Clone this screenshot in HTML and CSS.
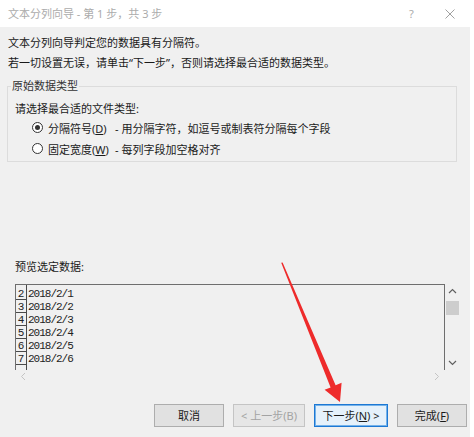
FILE: index.html
```html
<!DOCTYPE HTML>
<html>
    <head>
        <meta charset='utf-8'/>
        <link rel="stylesheet" href="styles.css">
    </head>
    <body>
        <div class="window">
            <div class="titlebar">
                <span class="title">文本分列向导 - 第 1 步，共 3 步</span>
                <span class="help">?</span>
                <svg class="close" width="10" height="10" viewBox="0 0 10 10">
                    <path d="M0.5 0.5 L9.5 9.5 M9.5 0.5 L0.5 9.5" stroke="#a0a0a0" stroke-width="1" fill="none"/>
                </svg>
            </div>
            <div class="dialog">
                <p class="intro">文本分列向导判定您的数据具有分隔符。</p>
                <p class="intro second">若一切设置无误，请单击“下一步”，否则请选择最合适的数据类型。</p>

                <fieldset class="group">
                    <legend>原始数据类型</legend>
                    <div class="ask">请选择最合适的文件类型:</div>
                    <div class="radio-row">
                        <span class="radio checked"></span>
                        <span class="radio-name">分隔符号(<u>D</u>)</span>
                        <span class="radio-desc">- 用分隔字符，如逗号或制表符分隔每个字段</span>
                    </div>
                    <div class="radio-row">
                        <span class="radio"></span>
                        <span class="radio-name">固定宽度(<u>W</u>)</span>
                        <span class="radio-desc">- 每列字段加空格对齐</span>
                    </div>
                </fieldset>

                <div class="preview-label">预览选定数据:</div>
                <div class="preview">
                    <div class="frame">
                        <div class="nums">
                            <div class="num">2</div>
                            <div class="num">3</div>
                            <div class="num">4</div>
                            <div class="num">5</div>
                            <div class="num">6</div>
                            <div class="num">7</div>
                            <div class="num"></div>
                        </div>
                        <div class="vals">
                            <div class="val">2018/2/1</div>
                            <div class="val">2018/2/2</div>
                            <div class="val">2018/2/3</div>
                            <div class="val">2018/2/4</div>
                            <div class="val">2018/2/5</div>
                            <div class="val">2018/2/6</div>
                        </div>
                    </div>
                    <div class="vscroll">
                        <svg class="chev" width="9" height="6" viewBox="0 0 9 6"><path d="M1 5 L4.5 1.5 L8 5" stroke="#606060" stroke-width="1.2" fill="none"/></svg>
                        <div class="thumb"></div>
                        <div class="track"></div>
                        <svg class="chev" width="9" height="6" viewBox="0 0 9 6"><path d="M1 1 L4.5 4.5 L8 1" stroke="#606060" stroke-width="1.2" fill="none"/></svg>
                    </div>
                </div>
                <div class="hscroll">
                    <svg width="6" height="9" viewBox="0 0 6 9"><path d="M5 1 L1.5 4.5 L5 8" stroke="#c4c4c4" stroke-width="1" fill="none"/></svg>
                    <svg width="6" height="9" viewBox="0 0 6 9"><path d="M1 1 L4.5 4.5 L1 8" stroke="#c4c4c4" stroke-width="1" fill="none"/></svg>
                </div>

                <div class="buttons">
                    <div class="btn w70">取消</div>
                    <div class="btn w72 disabled">&lt; 上一步(B)</div>
                    <div class="btn w74 default">下一步(<u>N</u>) &gt;</div>
                    <div class="btn w70">完成(<u>F</u>)</div>
                </div>
            </div>

            <!-- red pointer drawn over the dialog -->
            <svg class="pointer" width="474" height="437" viewBox="0 0 474 437">
                <polygon points="281.2,262.8 282.6,262.4 335.6,385.2 341.6,382.8 340,402 324.6,389.8 330.6,387.4" fill="#ee2b2b"/>
            </svg>
        </div>
    </body>
</html>
```

FILE: styles.css
```css
body{
    margin: 0;
    background: #ffffff;
    font-family: "Noto Sans", "Noto Sans CJK SC", sans-serif;
    font-size: 11px;
    color: #1a1a1a;
}
.window{
    position: relative;
    width: 470px;
    height: 437px;
}
.titlebar{
    height: 27px;
    display: flex;
    align-items: center;
    padding-left: 8px;
    background: #ffffff;
    color: #ababab;
}
.title{
    flex: 1;
    line-height: 16px;
}
.help{
    width: 7px;
    text-align: center;
    margin-right: 30px;
}
.close{
    margin-right: 15px;
}
.dialog{
    height: 410px;
    box-sizing: border-box;
    padding-top: 8px;
    background: #f0f0f0;
    display: flex;
    flex-direction: column;
}
.intro{
    margin: 0;
    padding-left: 8px;
    line-height: 16px;
}
.intro.second{
    margin-top: 4px;
}
.group{
    margin: 8px 0 0 7px;
    width: 450px;
    box-sizing: border-box;
    border: 1px solid #dcdcdc;
    padding: 0 0 2px 7px;
}
.group legend{
    padding: 0 1px;
    margin-left: -4px;
    line-height: 14px;
    color: #333333;
}
.ask{
    margin-top: 8px;
    line-height: 16px;
}
.radio-row{
    height: 21px;
    display: flex;
    align-items: center;
    padding-left: 17px;
}
.radio{
    flex: none;
    width: 11px;
    height: 11px;
    box-sizing: border-box;
    border: 1px solid #333333;
    border-radius: 50%;
    background: #ffffff;
    margin-right: 5px;
    display: flex;
    align-items: center;
    justify-content: center;
}
.radio.checked::after{
    content: "";
    width: 5px;
    height: 5px;
    border-radius: 50%;
    background: #333333;
}
.radio-name{
    flex: none;
    width: 67px;
}
.preview-label{
    margin-top: 97px;
    padding-left: 15px;
    line-height: 16px;
}
.preview{
    margin-top: 9px;
    margin-left: 15px;
    height: 86px;
    display: flex;
}
.frame{
    width: 430px;
    box-sizing: border-box;
    border-top: 1px solid #6e6e6e;
    border-right: 1px solid #6e6e6e;
    border-left: 1px solid #6e6e6e;
    display: flex;
    overflow: hidden;
    font-family: "Liberation Mono", monospace;
    font-size: 11px;
    color: #222222;
}
.nums{
    width: 11px;
    box-sizing: border-box;
    border-right: 1px solid #4a4a4a;
    padding-top: 2px;
}
.num{
    height: 13px;
    box-sizing: border-box;
    border-bottom: 1px solid #4a4a4a;
    line-height: 14px;
    text-align: center;
}
.vals{
    padding-top: 2px;
    padding-left: 1px;
}
.val{
    height: 13px;
    line-height: 14px;
    letter-spacing: -1px;
}
.vscroll{
    width: 14px;
    display: flex;
    flex-direction: column;
    align-items: center;
}
.chev{
    margin: 4px 0;
}
.thumb{
    margin-top: 3px;
    width: 13px;
    height: 14px;
    background: #cdcdcd;
}
.track{
    flex: 1;
}
.hscroll{
    margin-left: 15px;
    width: 430px;
    height: 13px;
    box-sizing: border-box;
    padding: 0 5px 0 5px;
    display: flex;
    align-items: center;
    justify-content: space-between;
}
.buttons{
    margin-top: 21px;
    display: flex;
    justify-content: flex-end;
    gap: 9px;
    padding-right: 3px;
}
.btn{
    height: 23px;
    box-sizing: border-box;
    border: 1px solid #adadad;
    background: #e1e1e1;
    display: flex;
    align-items: center;
    justify-content: center;
    color: #1a1a1a;
    line-height: 16px;
}
.w70{ width: 70px; }
.w72{ width: 72px; }
.w74{ width: 74px; }
.btn.disabled{
    color: #a3a3a3;
    border-color: #c4c4c4;
    background: #e6e6e6;
}
.btn.default{
    border-color: #1c78d4;
    box-shadow: inset 0 0 0 1px #74b2ea;
    background: #e5f1fb;
}
.pointer{
    position: absolute;
    left: 0;
    top: 0;
    pointer-events: none;
}
```
